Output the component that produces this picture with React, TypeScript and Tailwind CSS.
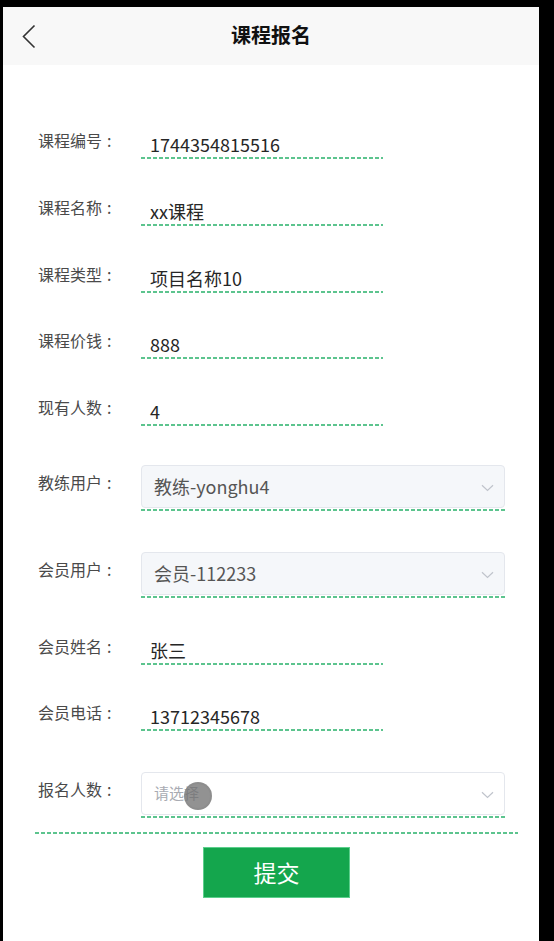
import React from "react";

const font = { fontFamily: '"Noto Sans CJK SC", "Noto Sans", sans-serif' };

function Dash({ className = "" }: { className?: string }) {
  return (
    <div
      className={`h-[2px] bg-[repeating-linear-gradient(90deg,#5cc48e_0px,#5cc48e_4px,transparent_4px,transparent_6px)] ${className}`}
    />
  );
}

function Label({ text, mt = "" }: { text: string; mt?: string }) {
  return (
    <div className={`w-[103px] shrink-0 text-[16px] leading-[20px] text-[#4a4a4a] whitespace-nowrap ${mt}`}>
      {text}
      <span className="ml-[5px]">:</span>
    </div>
  );
}

function TextRow({ label, value, mt }: { label: string; value: string; mt: string }) {
  return (
    <div className={`flex items-start ${mt}`}>
      <Label text={label} />
      <div className="w-[242px]">
        <div className="h-[27px] pl-[9px] text-[18px] leading-[28px] text-[#262626]">{value}</div>
        <Dash />
      </div>
    </div>
  );
}

function Chevron() {
  return (
    <svg width="13" height="8" viewBox="0 0 13 8" className="absolute right-[10px] top-[18px]">
      <path d="M1 1.2 L6.5 6.5 L12 1.2" fill="none" stroke="#c0c4cc" strokeWidth="1.2" />
    </svg>
  );
}

function SelectRow({
  label,
  value,
  mt,
  placeholder,
  children,
}: {
  label: string;
  value: string;
  mt: string;
  placeholder?: boolean;
  children?: React.ReactNode;
}) {
  return (
    <div className={`flex items-start ${mt}`}>
      <Label text={label} mt="mt-[7px]" />
      <div className="w-[364px]">
        <div
          className={`relative h-[43px] rounded-[4px] border border-[#e4e7ed] flex items-center pl-[12px] ${
            placeholder ? "bg-white text-[15px] text-[#a8abb2]" : "bg-[#f5f7fa] text-[18px] text-[#555]"
          }`}
        >
          {value}
          <Chevron />
          {children}
        </div>
        <Dash className="mt-[1px]" />
      </div>
    </div>
  );
}

export default function App() {
  return (
    <div className="w-[554px] h-[941px] bg-black overflow-hidden" style={font}>
      <div className="ml-[3px] mt-[7px] w-[536px] h-[934px] bg-white flex flex-col">
        <div className="relative h-[58px] bg-[#f8f8f8] flex items-center justify-center shrink-0">
          <svg width="16" height="26" viewBox="0 0 16 26" className="absolute left-[18px] top-[17px]">
            <path d="M13.5 1.5 L2.5 12.5 L13.5 23.5" fill="none" stroke="#333" strokeWidth="1.6" />
          </svg>
          <div className="text-[20px] font-bold text-[#111] -mt-[2px]">课程报名</div>
        </div>

        <div className="pl-[35px] flex flex-col">
          <TextRow label="课程编号" value="1744354815516" mt="mt-[65px]" />
          <TextRow label="课程名称" value="xx课程" mt="mt-[38px]" />
          <TextRow label="课程类型" value="项目名称10" mt="mt-[38px]" />
          <TextRow label="课程价钱" value="888" mt="mt-[37px]" />
          <TextRow label="现有人数" value="4" mt="mt-[38px]" />
          <SelectRow label="教练用户" value="教练-yonghu4" mt="mt-[39px]" />
          <SelectRow label="会员用户" value="会员-112233" mt="mt-[41px]" />
          <TextRow label="会员姓名" value="张三" mt="mt-[38px]" />
          <TextRow label="会员电话" value="13712345678" mt="mt-[37px]" />
          <SelectRow label="报名人数" value="请选择" mt="mt-[41px]" placeholder>
            <span className="absolute left-[42px] top-[9px] w-[28px] h-[28px] rounded-full bg-[#6e6e6e]/75 border-2 border-[#8a8a8a]/60" />
          </SelectRow>
        </div>

        <Dash className="ml-[32px] mt-[14px] w-[483px]" />

        <div className="ml-[200px] mt-[13px] w-[147px] h-[51px] bg-[#14a64d] border border-[#5ccf8c] flex items-center justify-center text-[23px] text-white">
          提交
        </div>
      </div>
    </div>
  );
}
